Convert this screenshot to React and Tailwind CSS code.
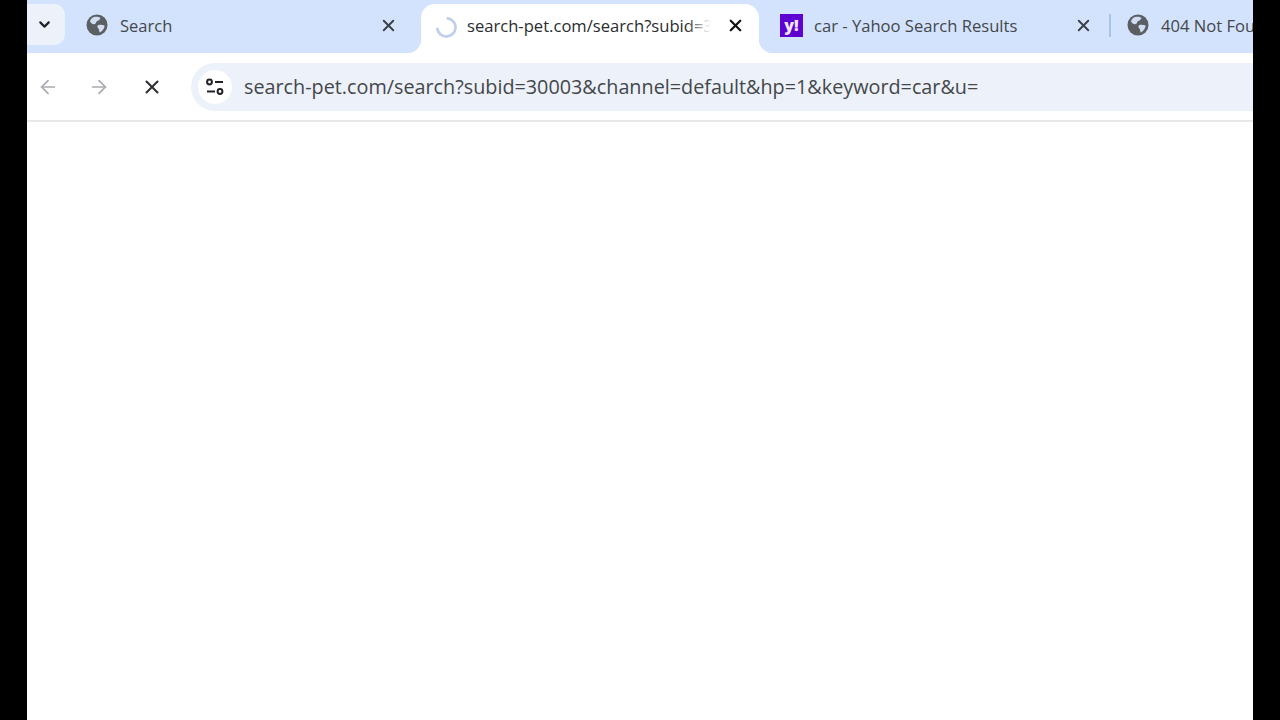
import React from "react";
import { X, ArrowLeft, ArrowRight, ChevronDown } from "lucide-react";

const font = { fontFamily: '"Open Sans", "Noto Sans", sans-serif' };

function Globe({ className }) {
  return (
    <svg viewBox="0 0 22 22" className={className}>
      <circle cx="11" cy="11" r="10.5" fill="#5b5e63" />
      <path d="M8 3 C11 2.4 14 3 14.5 4.2 C13.5 6.5 11.5 6.6 10.5 7.4 C10 9 9.5 10 8 10.2 C6 10 4.6 8.6 3.9 7.2 C4.8 5 6.2 3.6 8 3 Z" fill="#cfdcf2" />
      <path d="M12 11.2 C14 10.6 16.5 10.8 18.6 11.6 C18.6 14.4 16.6 17.4 13.6 18.6 C13 16.8 13.2 15.6 12.4 14.6 C11.4 13.4 11 12 12 11.2 Z" fill="#cfdcf2" />
    </svg>
  );
}

export default function App() {
  return (
    <div className="w-[1280px] h-[720px] flex bg-black overflow-hidden" style={font}>
      <div className="w-[27px] shrink-0" />
      <div className="w-[1226px] shrink-0 flex flex-col bg-white overflow-hidden">
        <div className="h-[53px] shrink-0 flex bg-[#d3e3fd]">
          <div className="w-[38px] h-[41px] mt-[4px] shrink-0 bg-[#edf2fa] rounded-r-[11px] flex items-center justify-center">
            <ChevronDown size={17} strokeWidth={3} className="text-[#1f2124] mr-[4px]" />
          </div>
          <div className="w-[356px] shrink-0 flex items-center pl-[21px] pb-[3px]">
            <Globe className="w-[22px] h-[22px] shrink-0" />
            <span className="ml-[12px] text-[16.5px] text-[#44474a] pt-[2px]">Search</span>
            <X size={19} strokeWidth={2.4} className="ml-auto mr-[23px] text-[#3c3f43]" />
          </div>
          <div className="relative w-[338px] shrink-0 mt-[4px] bg-white rounded-t-[14px] flex items-center pl-[14px] pb-[5px]">
            <div className="absolute left-[-14px] bottom-0 w-[14px] h-[14px] bg-[radial-gradient(circle_at_0_0,#d3e3fd_14px,#ffffff_14.5px)]" />
            <div className="absolute right-[-14px] bottom-0 w-[14px] h-[14px] bg-[radial-gradient(circle_at_100%_0,#d3e3fd_14px,#ffffff_14.5px)]" />
            <svg viewBox="0 0 24 24" className="w-[22px] h-[22px] shrink-0 mt-[1px]">
              <path d="M14 2.5 A10 10 0 1 1 2.5 14" fill="none" stroke="#c0cfec" strokeWidth="3" strokeLinecap="round" />
            </svg>
            <span className="relative ml-[10px] w-[244px] overflow-hidden whitespace-nowrap text-[16.6px] text-[#2b2d30] pt-[1px]">
              search-pet.com/search?subid=30003&amp;channel=default
              <span className="absolute right-0 top-0 bottom-0 w-[24px] bg-gradient-to-r from-transparent to-white" />
            </span>
            <X size={19} strokeWidth={2.8} className="ml-[15px] mb-[1px] text-[#111316]" />
          </div>
          <div className="w-[351px] shrink-0 flex items-center pl-[21px] pb-[3px]">
            <div className="w-[23px] h-[23px] shrink-0 bg-[#5f01d1] flex items-center justify-center text-[#f3e9ff] font-extrabold text-[16px] leading-none">y!</div>
            <span className="ml-[11px] text-[16.6px] text-[#44474a] pt-[2px] whitespace-nowrap">car - Yahoo Search Results</span>
            <X size={19} strokeWidth={2.4} className="ml-auto mr-[16px] text-[#3c3f43]" />
            <div className="w-[2px] h-[23px] bg-[#a8c3e8] shrink-0 mr-[-1px]" />
          </div>
          <div className="flex-1 min-w-0 flex items-center pl-[17px] pb-[3px] overflow-hidden">
            <Globe className="w-[22px] h-[22px] shrink-0" />
            <span className="ml-[12px] text-[16.6px] text-[#44474a] pt-[2px] whitespace-nowrap">404 Not Found</span>
          </div>
        </div>
        <div className="h-[69px] shrink-0 flex items-center border-b-[2px] border-[#e6e8ea] bg-white">
          <ArrowLeft size={22} strokeWidth={1.9} className="ml-[10px] text-[#a8abaf] shrink-0" />
          <ArrowRight size={22} strokeWidth={1.9} className="ml-[29px] text-[#a8abaf] shrink-0" />
          <X size={22} strokeWidth={2.3} className="ml-[31px] text-[#303336] shrink-0" />
          <div className="ml-[28px] flex-1 h-[48px] bg-[#edf2fa] rounded-l-[24px] flex items-center pl-[7px]">
            <div className="w-[34px] h-[34px] rounded-full bg-white flex items-center justify-center shrink-0">
              <svg viewBox="0 0 20 20" className="w-[20px] h-[20px]" fill="none" stroke="#202226" strokeWidth="2">
                <circle cx="4.5" cy="5" r="2.4" />
                <path d="M10 5 H18" />
                <path d="M2 14.5 H10" />
                <circle cx="15" cy="14.5" r="2.4" />
              </svg>
            </div>
            <span className="ml-[12px] text-[19.8px] text-[#44474a] whitespace-nowrap">search-pet.com/search?subid=30003&amp;channel=default&amp;hp=1&amp;keyword=car&amp;u=</span>
          </div>
        </div>
        <div className="flex-1 bg-white" />
      </div>
      <div className="flex-1 bg-black" />
    </div>
  );
}
